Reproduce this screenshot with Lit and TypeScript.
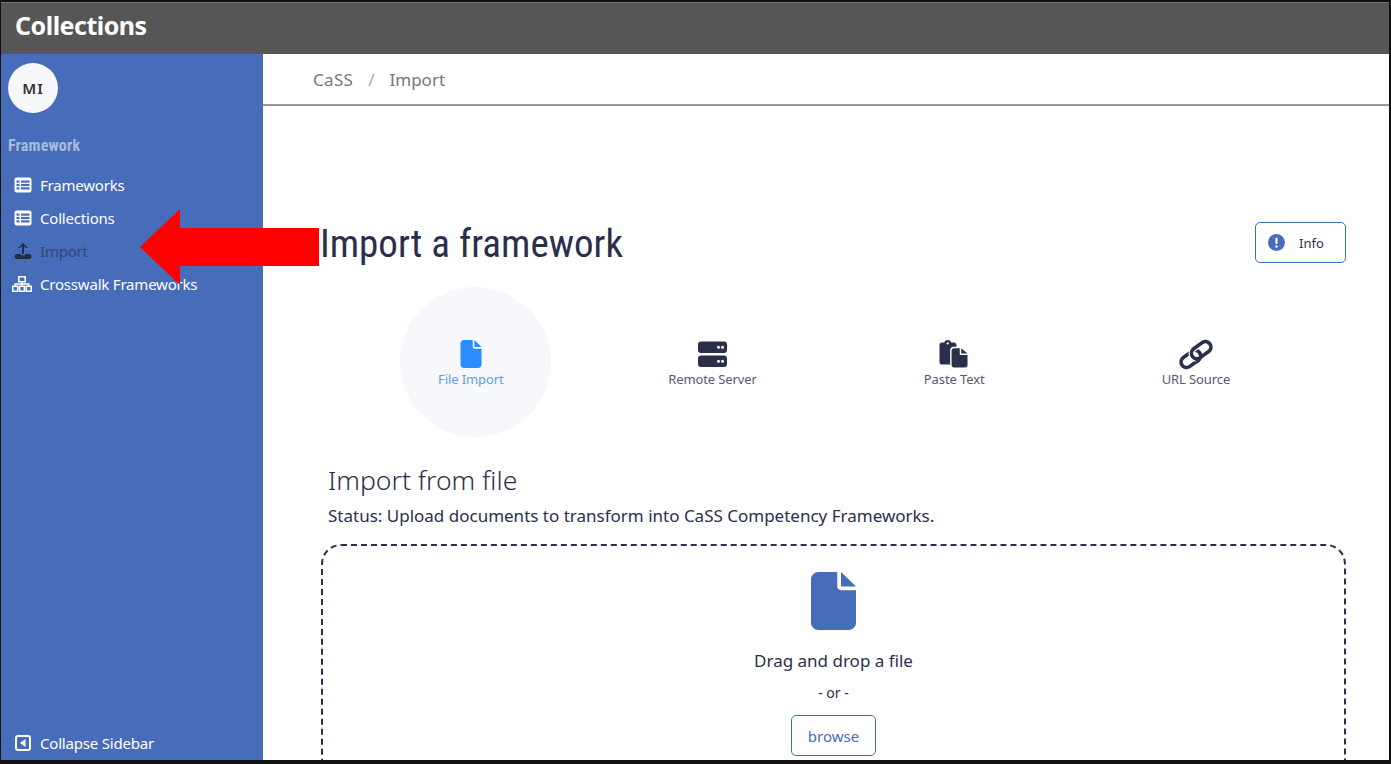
import { LitElement, html, css, svg } from 'lit';
import { customElement } from 'lit/decorators.js';

const filePath = 'M0 64C0 28.7 28.7 0 64 0H224V128c0 17.7 14.3 32 32 32H384V448c0 35.3-28.7 64-64 64H64c-35.3 0-64-28.7-64-64V64zm384 64H256V0L384 128z';

const tableIcon = svg`<svg class="nav-icon" viewBox="0 0 18 16"><rect x="0.500" y="0.500" width="17" height="15" rx="2" fill="#fff"/><g fill="#476cb9"><rect x="2.500" y="3.500" width="3" height="2.200"/><rect x="2.500" y="6.900" width="3" height="2.200"/><rect x="2.500" y="10.300" width="3" height="2.200"/><rect x="7" y="3.500" width="8.500" height="2.200"/><rect x="7" y="6.900" width="8.500" height="2.200"/><rect x="7" y="10.300" width="8.500" height="2.200"/></g></svg>`;
const uploadIcon = svg`<svg class="nav-icon" viewBox="0 0 18 16"><path d="M9 0 L14 5 H12.200 L10 3 V11 H8 V3 L5.800 5 H4 Z" fill="#252a45"/><path d="M3 11H6.500C7 12.200 7.800 12.500 9 12.500S11 12.200 11.500 11H15C16.500 11 17.500 12 17.500 13.500S16.500 16 15 16H3C1.500 16 0.500 15 0.500 13.500S1.500 11 3 11Z" fill="#252a45"/></svg>`;
const sitemapIcon = svg`<svg class="nav-icon wide" viewBox="0 0 20 16"><g fill="#fff"><path d="M6 0h8v6.500H6z M7.600 1.600v3.300h4.800V1.600z" fill-rule="evenodd"/><path d="M0 9.500h6.500v6.500H0z M1.600 11.100v3.300h3.300v-3.300z" fill-rule="evenodd"/><path d="M6.800 9.500h6.400v6.500H6.800z M8.400 11.100v3.300h3.200v-3.300z" fill-rule="evenodd"/><path d="M13.500 9.500H20v6.500h-6.500z M15.100 11.100v3.300h3.300v-3.300z" fill-rule="evenodd"/><path d="M9.200 6.500h1.600V7.300H17.600V9.500H16V8.700H10.800V9.500H9.200V8.700H4V9.500H2.400V7.300H9.200z"/></g></svg>`;
const collapseIcon = svg`<svg class="nav-icon small" viewBox="0 0 16 16"><rect x="1" y="1" width="14" height="14" rx="2" fill="none" stroke="#fff" stroke-width="2"/><path d="M10.500 4V12L5 8Z" fill="#fff"/></svg>`;
const serverIcon = svg`<svg class="tab-icon" viewBox="0 0 30 28" style="width:30px"><g fill="#2b2f4b"><rect y="1.500" width="29" height="11.500" rx="3"/><rect y="15.500" width="29" height="11.500" rx="3"/></g><g fill="#fff"><circle cx="20.500" cy="7.300" r="1.500"/><circle cx="24.500" cy="7.300" r="1.500"/><circle cx="20.500" cy="21.300" r="1.500"/><circle cx="24.500" cy="21.300" r="1.500"/></g></svg>`;
const pasteIcon = svg`<svg class="tab-icon" viewBox="0 0 30 29" style="width:30px"><path d="M2.500 2.500H5C5.500 0.800 7 0 8.500 0S11.500 0.800 12 2.500H15C16.500 2.500 17.500 3.500 17.500 5V7H14.500C12.500 7 11 8.500 11 10.500V25.500H2.500C1 25.500 0 24.500 0 23V5C0 3.500 1 2.500 2.500 2.500Z" fill="#2b2f4b"/><circle cx="8.500" cy="3.500" r="1.200" fill="#fff"/><path d="M15 8.500H21V15.500H29V26C29 27.500 28 28.500 26.500 28.500H15C13.500 28.500 12.500 27.500 12.500 26V11C12.500 9.500 13.500 8.500 15 8.500ZM22.500 8.500L29 14H22.500Z" fill="#2b2f4b"/></svg>`;
const linkIcon = svg`<svg class="tab-icon link-icon" viewBox="0 0 34 27"><g fill="none" stroke-width="3.600" transform="rotate(-36 17 13.500)"><rect x="-0.500" y="8.500" width="21.500" height="11" rx="5.500" stroke="#2b2f4b"/><rect x="13" y="7.500" width="21.500" height="11" rx="5.500" stroke="#fff" stroke-width="6"/><rect x="13" y="7.500" width="21.500" height="11" rx="5.500" stroke="#2b2f4b"/><path d="M13 19.500H15.500C18.500 19.500 21 17 21 14" stroke="#2b2f4b"/></g></svg>`;

@customElement('app-root')
export class AppRoot extends LitElement {
  static styles = css`
    :host {
      display: block;
      box-sizing: border-box;
      position: relative;
      height: 764px;
      overflow: hidden;
      background: #fff;
      border-top: 2px solid #111;
      border-left: 1px solid #111;
      border-right: 2px solid #111;
      border-bottom: 4px solid #111;
      font-family: 'Noto Sans', sans-serif;
      color: #2b2f4b;
    }

    .topbar {
      height: 52px;
      box-sizing: border-box;
      padding-left: 14px;
      background: #565656;
      border-top: 1px solid #777;
      color: #fff;
      font-size: 25px;
      font-weight: 700;
      letter-spacing: -0.5px;
      line-height: 44px;
    }

    .body {
      display: flex;
      height: 706px;
    }

    .sidebar {
      width: 262px;
      flex: none;
      display: flex;
      flex-direction: column;
      box-sizing: border-box;
      padding: 9px 0 1px;
      background: #476cb9;
      color: #fff;
      font-size: 15px;
      letter-spacing: -0.2px;
    }

    .avatar {
      width: 50px;
      height: 50px;
      margin-left: 7px;
      border-radius: 50%;
      background: #f7f8fb;
      color: #333;
      font-size: 15px;
      font-weight: 600;
      letter-spacing: 1px;
      display: flex;
      align-items: center;
      justify-content: center;
    }

    .group {
      margin: 23px 0 12px 7px;
      font-family: 'Roboto', sans-serif;
      font-stretch: condensed;
      font-size: 16px;
      font-weight: 700;
      letter-spacing: 0.2px;
      color: #a8b9df;
      line-height: 20px;
    }

    .nav {
      display: flex;
      align-items: center;
      gap: 8px;
      height: 33px;
      padding-left: 13px;
    }

    .nav.dim span {
      color: #2f3a5e;
      opacity: 0.75;
    }

    .nav-icon {
      width: 18px;
      height: 16px;
      flex: none;
    }

    .nav-icon.wide {
      width: 20px;
      margin-left: -2px;
    }

    .nav-icon.small {
      width: 16px;
      margin-left: 1px;
      margin-right: 1px;
    }

    .collapse {
      margin-top: auto;
    }

    .main {
      flex: 1;
      min-width: 0;
    }

    .crumbs {
      height: 52px;
      box-sizing: border-box;
      border-bottom: 2px solid #999;
      padding-left: 50px;
      display: flex;
      align-items: center;
      gap: 15px;
      font-size: 17px;
      color: #777;
    }

    .crumbs span:first-child {
      letter-spacing: 0.3px;
    }

    .sep {
      color: #aaa;
    }

    .content {
      padding: 116px 43px 0 59px;
    }

    .head {
      display: flex;
      justify-content: space-between;
      height: 41px;
    }

    h1 {
      margin: 0 0 0 -2px;
      font-family: 'Roboto', sans-serif;
      font-stretch: condensed;
      font-size: 39px;
      font-weight: 400;
      line-height: 44px;
      white-space: nowrap;
    }

    .info {
      box-sizing: border-box;
      width: 91px;
      height: 41px;
      border: 1px solid #3a72c4;
      border-radius: 5px;
      background: #fff;
      display: flex;
      align-items: center;
      gap: 14px;
      padding-left: 12px;
      font: inherit;
      font-size: 13px;
      color: #2b2f4b;
    }

    .info svg {
      width: 17px;
      height: 17px;
    }

    .tabs {
      display: flex;
      margin: 24px 0 0 28px;
      height: 150px;
    }

    .tab {
      position: relative;
      width: 241.7px;
      display: flex;
      flex-direction: column;
      align-items: center;
      padding-top: 53px;
      box-sizing: border-box;
      font-size: 13px;
      letter-spacing: -0.1px;
      color: #555a70;
    }

    .tab.on {
      color: #5b9df5;
    }

    .tab.on::before {
      content: '';
      position: absolute;
      top: 0;
      left: 50px;
      width: 151px;
      height: 150px;
      border-radius: 50%;
      background: #f7f8fb;
    }

    .tab > * {
      position: relative;
    }

    .tab-icon {
      height: 28px;
      width: 22px;
      display: block;
    }

    .tab-icon.link-icon {
      width: 34px;
      height: 27px;
      margin-top: 1px;
      overflow: visible;
    }

    .tab span {
      line-height: 20px;
      margin-top: 1px;
    }

    h2 {
      margin: 26px 0 0 6px;
      font-size: 26.5px;
      font-weight: 300;
      line-height: 34px;
    }

    .status {
      margin: 7px 0 0 6px;
      font-size: 17px;
      line-height: 24px;
    }

    .drop {
      margin: 16px 0 0 -1px;
      height: 300px;
      box-sizing: border-box;
      border: 2px dashed #2b2f4b;
      border-radius: 20px;
      padding-top: 26px;
      display: flex;
      flex-direction: column;
      align-items: center;
    }

    .drop svg {
      width: 45px;
      height: 58px;
    }

    .drag {
      margin-top: 19px;
      font-size: 17px;
      line-height: 24px;
    }

    .or {
      margin-top: 10px;
      font-size: 14px;
      line-height: 20px;
    }

    .browse {
      margin-top: 12px;
      box-sizing: border-box;
      width: 85px;
      height: 41px;
      border: 1px solid #3a72c4;
      border-radius: 5px;
      background: #fff;
      color: #476cb9;
      font: inherit;
      font-size: 15px;
    }

    .arrow {
      position: absolute;
      left: 139px;
      top: 207px;
      width: 179px;
      height: 76px;
    }
  `;

  render() {
    return html`
      <div class="topbar">Collections</div>
      <div class="body">
        <aside class="sidebar">
          <div class="avatar">MI</div>
          <div class="group">Framework</div>
          <div class="nav">${tableIcon}<span>Frameworks</span></div>
          <div class="nav">${tableIcon}<span>Collections</span></div>
          <div class="nav dim">${uploadIcon}<span>Import</span></div>
          <div class="nav">${sitemapIcon}<span>Crosswalk Frameworks</span></div>
          <div class="nav collapse">${collapseIcon}<span>Collapse Sidebar</span></div>
        </aside>
        <main class="main">
          <div class="crumbs"><span>CaSS</span><span class="sep">/</span><span>Import</span></div>
          <div class="content">
            <div class="head">
              <h1>Import a framework</h1>
              <button class="info">
                <svg viewBox="0 0 16 16"><circle cx="8" cy="8" r="8" fill="#476cb9"/><rect x="7" y="3.500" width="2" height="6" rx="0.800" fill="#fff"/><circle cx="8" cy="11.700" r="1.200" fill="#fff"/></svg>
                Info
              </button>
            </div>
            <div class="tabs">
              <div class="tab on">
                <svg class="tab-icon" viewBox="0 0 384 512"><path d=${filePath} fill="#2a8cff"/></svg>
                <span>File Import</span>
              </div>
              <div class="tab">${serverIcon}<span>Remote Server</span></div>
              <div class="tab">${pasteIcon}<span>Paste Text</span></div>
              <div class="tab">${linkIcon}<span>URL Source</span></div>
            </div>
            <h2>Import from file</h2>
            <div class="status">Status: Upload documents to transform into CaSS Competency Frameworks.</div>
            <div class="drop">
              <svg viewBox="0 0 384 512" preserveAspectRatio="none"><path d=${filePath} fill="#476cb9"/></svg>
              <div class="drag">Drag and drop a file</div>
              <div class="or">- or -</div>
              <button class="browse">browse</button>
            </div>
          </div>
        </main>
      </div>
      <svg class="arrow" viewBox="0 0 179 76"><path d="M0 38 L40 0 V19 H179 V57 H40 V76 Z" fill="#ff0000"/></svg>
    `;
  }
}
